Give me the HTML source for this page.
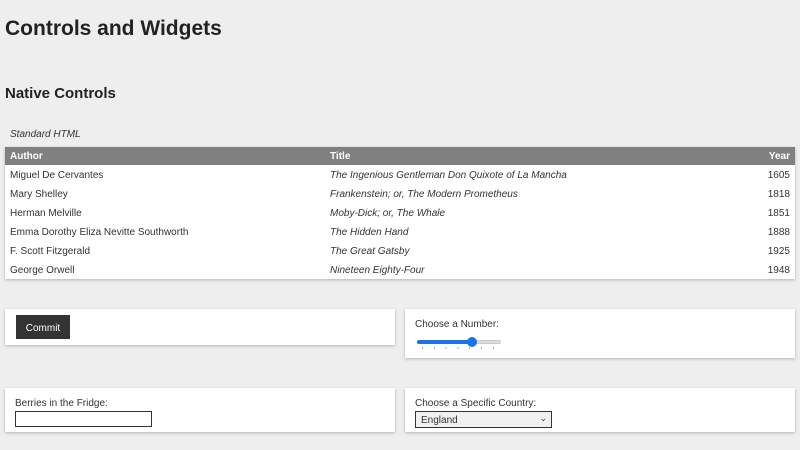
<!DOCTYPE html>
<html><head><style>
body{margin:0;width:800px;height:450px;background:#eeeeee;font-family:"Liberation Sans",sans-serif;color:#333;position:relative;overflow:hidden}
.a{position:absolute}
h1{position:absolute;left:5px;top:17px;margin:0;font-size:21px;font-weight:bold;color:#222}
h2{position:absolute;left:5px;top:85px;margin:0;font-size:15px;font-weight:bold;color:#222}
.cap{left:10px;top:129px;font-size:10px;font-style:italic}
table{position:absolute;left:5px;top:147px;width:790px;border-collapse:collapse;background:#fff;font-size:10px;box-shadow:0 1px 3px rgba(0,0,0,.25)}
th{background:#808080;color:#fff;text-align:left;height:18px;padding:0 5px;font-weight:bold}
td{height:19px;padding:2px 5px 0 5px;box-sizing:border-box}
.r{text-align:right}
i{font-style:italic}
.p{position:absolute;background:#fff;box-shadow:0 1px 3px rgba(0,0,0,.25)}
.l{font-size:10px}
</style></head><body>
<h1>Controls and Widgets</h1>
<h2>Native Controls</h2>
<div class="a cap">Standard HTML</div>
<table>
<tr><th style="width:315px;padding-right:0">Author</th><th>Title</th><th class="r">Year</th></tr>
<tr><td>Miguel De Cervantes</td><td><i>The Ingenious Gentleman Don Quixote of La Mancha</i></td><td class="r">1605</td></tr>
<tr><td>Mary Shelley</td><td><i>Frankenstein; or, The Modern Prometheus</i></td><td class="r">1818</td></tr>
<tr><td>Herman Melville</td><td><i>Moby-Dick; or, The Whale</i></td><td class="r">1851</td></tr>
<tr><td>Emma Dorothy Eliza Nevitte Southworth</td><td><i>The Hidden Hand</i></td><td class="r">1888</td></tr>
<tr><td>F. Scott Fitzgerald</td><td><i>The Great Gatsby</i></td><td class="r">1925</td></tr>
<tr><td>George Orwell</td><td><i>Nineteen Eighty-Four</i></td><td class="r">1948</td></tr>
</table>
<div class="p" style="left:5px;top:309px;width:390px;height:36px">
<div class="a" style="left:11px;top:6px;width:54px;height:24px;background:#333;color:#fff;font-size:10px;display:flex;align-items:center;justify-content:center;padding-top:2px;box-sizing:border-box">Commit</div></div>
<div class="p" style="left:405px;top:309px;width:390px;height:49px">
<div class="a l" style="left:10px;top:10px">Choose a Number:</div>
<div class="a" style="left:12px;top:31px;width:84px;height:4px;border-radius:2px;background:#ddd;border:1px solid #ccc;box-sizing:border-box"></div>
<div class="a" style="left:12px;top:31px;width:55px;height:4px;border-radius:2px;background:#1a73e8"></div>
<div class="a" style="left:62px;top:28px;width:10px;height:10px;border-radius:50%;background:#1a73e8"></div>
<div class="a" style="left:17px;top:38px;width:78px;height:2px;background:repeating-linear-gradient(90deg,#aaa 0 1px,transparent 1px 11.8px)"></div>
</div>
<div class="p" style="left:5px;top:388px;width:390px;height:44px">
<div class="a l" style="left:10px;top:10px">Berries in the Fridge:</div>
<div class="a" style="left:10px;top:23px;width:137px;height:16px;border:1px solid #333;box-sizing:border-box"></div></div>
<div class="p" style="left:405px;top:388px;width:390px;height:44px">
<div class="a l" style="left:10px;top:10px">Choose a Specific Country:</div>
<div class="a" style="left:10px;top:23px;width:137px;height:17px;border:1px solid #333;box-sizing:border-box;background:#f0f0f0;font-size:10px;line-height:17px;padding-left:5px">England<span style="position:absolute;right:4px;top:-2px;font-size:9px">&#8964;</span></div></div>
</body></html>
